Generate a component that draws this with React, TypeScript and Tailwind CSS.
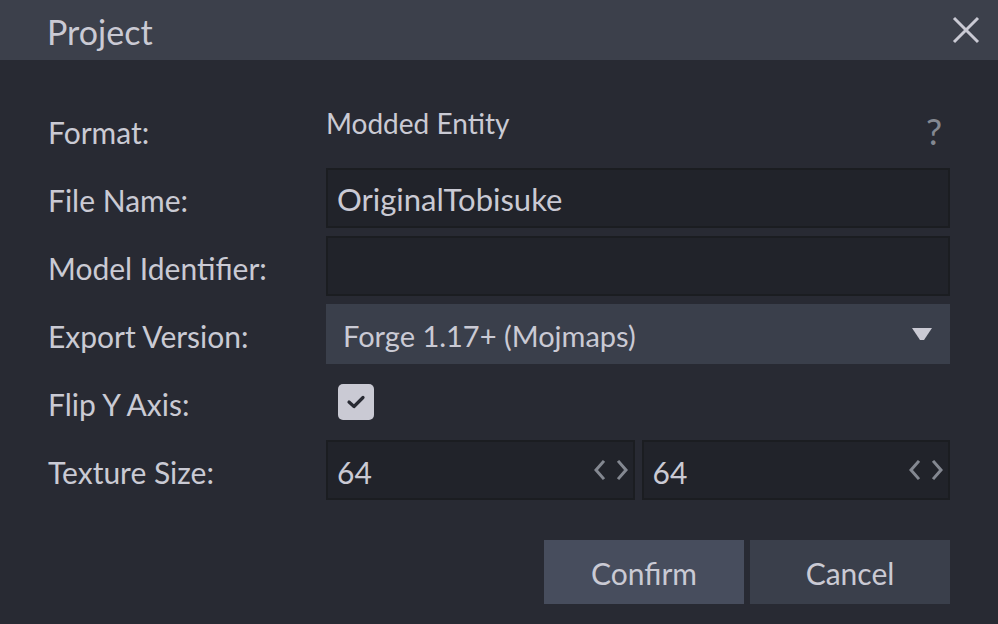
function Row({ label, children, className = "" }: { label: string; children: React.ReactNode; className?: string }) {
    return (
        <div className={`flex items-center ${className}`}>
            <div className="w-[278px] shrink-0 text-[#cacad4] text-[30px] pt-[4px]">{label}</div>
            <div className="flex-1 flex items-center min-w-0">{children}</div>
        </div>
    )
}

function Arrows() {
    return (
        <svg width="36" height="22" viewBox="0 0 36 22" fill="none" stroke="#848891" strokeWidth="3" strokeLinecap="square">
            <path d="M10 3 L3 11 L10 19" />
            <path d="M26 3 L33 11 L26 19" />
        </svg>
    )
}

export default function App() {
    return (
        <div className="w-[998px] h-[624px] bg-[#282a33] overflow-hidden text-[28px] leading-none" style={{ fontFamily: "Lato, 'Open Sans', sans-serif" }}>
            <div className="h-[60px] bg-[#3c404b] flex items-center justify-between pl-[47px] pr-[18px]">
                <span className="text-[#cacad4] text-[34px] mt-[3px]">Project</span>
                <svg width="28" height="28" viewBox="0 0 28 28" stroke="#cacad4" strokeWidth="3">
                    <path d="M2 2 L26 26 M26 2 L2 26" />
                </svg>
            </div>

            <div className="pl-[48px] pr-[48px] pt-[40px] flex flex-col">
                <Row label="Format:" className="h-[60px] mb-[8px]">
                    <span className="text-[#cacad4] -mt-[15px]">Modded Entity</span>
                    <span className="ml-auto mr-[8px] text-[#848891] text-[36px] mt-[2px]">?</span>
                </Row>
                <Row label="File Name:" className="h-[60px] mb-[8px]">
                    <div className="w-full h-[60px] bg-[#21232a] border-2 border-[#1b1d21] flex items-center px-[9px] pt-[2px] text-[#cacad4] text-[31px]">
                        OriginalTobisuke
                    </div>
                </Row>
                <Row label="Model Identifier:" className="h-[60px] mb-[8px]">
                    <div className="w-full h-[60px] bg-[#21232a] border-2 border-[#1b1d21]" />
                </Row>
                <Row label="Export Version:" className="h-[60px] mb-[8px]">
                    <div className="w-full h-[60px] bg-[#3a3f4b] flex items-center justify-between pl-[17px] pr-[18px] text-[#cacad4] text-[29px]">
                        <span className="pt-[3px]">Forge 1.17+ (Mojmaps)</span>
                        <svg width="20" height="12" viewBox="0 0 20 12">
                            <path d="M0 0 H20 L12 12 H8 Z" fill="#cacad4" />
                        </svg>
                    </div>
                </Row>
                <Row label="Flip Y Axis:" className="h-[60px] mb-[8px]">
                    <div className="ml-[12px] w-[36px] h-[36px] rounded-[5px] bg-[#cacad4] flex items-center justify-center">
                        <svg width="20" height="16" viewBox="0 0 20 16" fill="none" stroke="#282a33" strokeWidth="3.2" strokeLinecap="round" strokeLinejoin="round">
                            <path d="M3 8 L8 12.5 L17 3.5" />
                        </svg>
                    </div>
                </Row>
                <Row label="Texture Size:" className="h-[60px]">
                    <div className="flex gap-[7px] w-full">
                        <div className="flex-1 h-[60px] bg-[#21232a] border-2 border-[#1b1d21] flex items-center justify-between pl-[9px] pr-[4px] text-[#cacad4] text-[30px]">
                            <span className="pt-[3px]">64</span>
                            <Arrows />
                        </div>
                        <div className="flex-1 h-[60px] bg-[#21232a] border-2 border-[#1b1d21] flex items-center justify-between pl-[9px] pr-[4px] text-[#cacad4] text-[30px]">
                            <span className="pt-[3px]">64</span>
                            <Arrows />
                        </div>
                    </div>
                </Row>

                <div className="flex justify-end gap-[6px] mt-[40px]">
                    <button className="w-[200px] h-[64px] bg-[#474d5d] text-[#cacad4] text-[30px] pt-[2px]">Confirm</button>
                    <button className="w-[200px] h-[64px] bg-[#3a3f4b] text-[#cacad4] text-[30px] pt-[2px]">Cancel</button>
                </div>
            </div>
        </div>
    )
}
